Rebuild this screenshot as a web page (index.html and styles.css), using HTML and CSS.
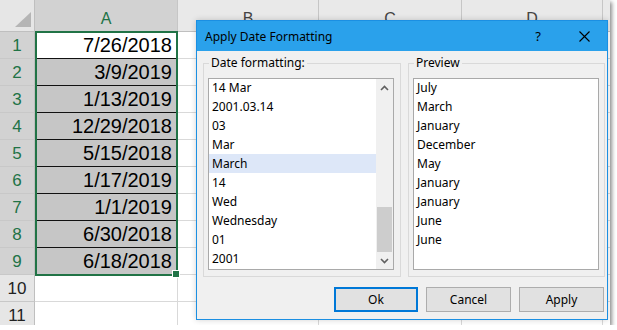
FILE: index.html
```html
<!DOCTYPE html>
<html>
<head>
<meta charset="utf-8">
<link rel="stylesheet" href="styles.css">
</head>
<body>
<div class="frame">
  <div class="sheet">
    <div class="corner"><svg width="18" height="16" viewBox="0 0 18 16"><polygon points="17,0 17,15 1,15" fill="#b5b5b5"/></svg></div>
    <div class="ch sel">A</div><div class="ch">B</div><div class="ch">C</div><div class="ch">D</div><div class="ch edge"></div>

    <div class="rh sel">1</div><div class="c a first">7/26/2018</div><div class="c"></div><div class="c"></div><div class="c"></div><div class="c edge"></div>
    <div class="rh sel">2</div><div class="c a">3/9/2019</div><div class="c"></div><div class="c"></div><div class="c"></div><div class="c edge"></div>
    <div class="rh sel">3</div><div class="c a">1/13/2019</div><div class="c"></div><div class="c"></div><div class="c"></div><div class="c edge"></div>
    <div class="rh sel">4</div><div class="c a">12/29/2018</div><div class="c"></div><div class="c"></div><div class="c"></div><div class="c edge"></div>
    <div class="rh sel">5</div><div class="c a">5/15/2018</div><div class="c"></div><div class="c"></div><div class="c"></div><div class="c edge"></div>
    <div class="rh sel">6</div><div class="c a">1/17/2019</div><div class="c"></div><div class="c"></div><div class="c"></div><div class="c edge"></div>
    <div class="rh sel">7</div><div class="c a">1/1/2019</div><div class="c"></div><div class="c"></div><div class="c"></div><div class="c edge"></div>
    <div class="rh sel">8</div><div class="c a">6/30/2018</div><div class="c"></div><div class="c"></div><div class="c"></div><div class="c edge"></div>
    <div class="rh sel">9</div><div class="c a">6/18/2018</div><div class="c"></div><div class="c"></div><div class="c"></div><div class="c edge"></div>
    <div class="rh">10</div><div class="c"></div><div class="c"></div><div class="c"></div><div class="c"></div><div class="c edge"></div>
    <div class="rh">11</div><div class="c"></div><div class="c"></div><div class="c"></div><div class="c"></div><div class="c edge"></div>
  </div>

  <div class="selection"><span class="handle"></span></div>

  <div class="dialog">
    <div class="titlebar">
      <span class="title">Apply Date Formatting</span>
      <span class="tbtn help">?</span>
      <span class="tbtn close"><svg width="11" height="11" viewBox="0 0 11 11"><path d="M0.5 0.5 L10.5 10.5 M10.5 0.5 L0.5 10.5" stroke="#000" stroke-width="1.1" fill="none"/></svg></span>
    </div>
    <div class="body">
      <div class="groups">
        <fieldset class="group left">
          <legend>Date formatting:</legend>
          <div class="list">
            <div class="items">
              <div class="item">14 Mar</div>
              <div class="item">2001.03.14</div>
              <div class="item">03</div>
              <div class="item">Mar</div>
              <div class="item hl">March</div>
              <div class="item">14</div>
              <div class="item">Wed</div>
              <div class="item">Wednesday</div>
              <div class="item">01</div>
              <div class="item">2001</div>
            </div>
            <div class="scrollbar">
              <div class="sbtn"><svg width="9" height="6" viewBox="0 0 9 6"><path d="M1 5 L4.5 1.5 L8 5" stroke="#606060" stroke-width="1.6" fill="none"/></svg></div>
              <div class="track"><div class="thumb"></div></div>
              <div class="sbtn"><svg width="9" height="6" viewBox="0 0 9 6"><path d="M1 1 L4.5 4.5 L8 1" stroke="#606060" stroke-width="1.6" fill="none"/></svg></div>
            </div>
          </div>
        </fieldset>
        <fieldset class="group right">
          <legend>Preview</legend>
          <div class="list">
            <div class="items">
              <div class="item">July</div>
              <div class="item">March</div>
              <div class="item">January</div>
              <div class="item">December</div>
              <div class="item">May</div>
              <div class="item">January</div>
              <div class="item">January</div>
              <div class="item">June</div>
              <div class="item">June</div>
            </div>
          </div>
        </fieldset>
      </div>
      <div class="buttons">
        <button class="btn default">Ok</button>
        <button class="btn">Cancel</button>
        <button class="btn">Apply</button>
      </div>
    </div>
  </div>
</div>
</body>
</html>
```
FILE: styles.css
```css
html, body {
  margin: 0;
  padding: 0;
  background: #ffffff;
}

.frame {
  position: relative;
  width: 610px;
  height: 325px;
  overflow: hidden;
  box-shadow: 2px 2px 4px rgba(0, 0, 0, 0.45);
  background: #fff;
}

.sheet {
  display: grid;
  grid-template-columns: 35px 143px 141px 143px 141px 7px;
  grid-template-rows: 32px repeat(11, 27px);
  font-family: "Liberation Sans", Arial, sans-serif;
}

.sheet > div {
  box-sizing: border-box;
}

.corner {
  background: #e6e6e6;
  border-right: 1px solid #bfbfbf;
  border-bottom: 1px solid #bfbfbf;
  display: flex;
  align-items: flex-end;
  justify-content: flex-end;
  padding: 0 2px 3px 0;
}

.corner svg {
  display: block;
}

.ch {
  background: #e9e9e9;
  border-right: 1px solid #c6c6c6;
  border-bottom: 1px solid #bfbfbf;
  text-align: center;
  font-size: 16px;
  padding-top: 7px;
  line-height: 24px;
  color: #444;
}

.ch.sel {
  background: #d2d2d2;
  color: #217346;
}

.ch.edge {
  border-right: none;
}

.rh {
  background: #e6e6e6;
  border-right: 1px solid #bfbfbf;
  border-bottom: 1px solid #c8c8c8;
  text-align: center;
  font-size: 17px;
  padding-top: 2px;
  line-height: 24px;
  color: #222;
}

.rh.sel {
  background: #d2d2d2;
  color: #217346;
}

.c {
  border-right: 1px solid #d9d9d9;
  border-bottom: 1px solid #d9d9d9;
  background: #fff;
}

.c.edge {
  border-right: none;
}

.c.a {
  background: #c6c6c6;
  border-bottom: 1px solid #111;
  text-align: right;
  padding-right: 5px;
  font-size: 20px;
  line-height: 26px;
  color: #000;
}

.c.a.first {
  background: #fff;
}

.selection {
  position: absolute;
  left: 35px;
  top: 31px;
  width: 143px;
  height: 245px;
  box-sizing: border-box;
  border: 2px solid #217346;
  pointer-events: none;
}

.handle {
  position: absolute;
  right: -4px;
  bottom: -4px;
  width: 6px;
  height: 6px;
  background: #217346;
  border: 1px solid #fff;
}

.dialog {
  position: absolute;
  left: 196px;
  top: 20px;
  width: 412px;
  height: 300px;
  box-sizing: border-box;
  border: 1px solid #1b8fe2;
  background: #f0f0f0;
  font-family: "Segoe UI", "Noto Sans", "Open Sans", sans-serif;
  font-size: 12px;
  color: #000;
  box-shadow: 0 0 6px rgba(0, 0, 0, 0.18);
}

.titlebar {
  height: 30px;
  background: #2aa1eb;
  display: flex;
  align-items: center;
}

.title {
  flex: 1;
  padding-left: 8px;
  font-size: 12px;
}

.tbtn {
  width: 46px;
  height: 30px;
  display: flex;
  align-items: center;
  justify-content: center;
}

.tbtn.help {
  font-size: 13px;
}

.tbtn svg {
  display: block;
}

.body {
  padding: 5px 0 0 6px;
}

.groups {
  display: flex;
  gap: 7px;
}

.group {
  margin: 0;
  border: 1px solid #d9d9d9;
  padding: 8px 6px 6px 4px;
  box-sizing: border-box;
  width: 198px;
  min-width: 0;
}

.group.right {
  width: 197px;
  padding-right: 5px;
}

.group legend {
  padding: 0 2px;
  margin-left: 1px;
  line-height: 14px;
  font-size: 12px;
}

.list {
  height: 192px;
  width: 186px;
  box-sizing: border-box;
  border: 1px solid #a9a9a9;
  background: #fff;
  display: flex;
  overflow: hidden;
}

.items {
  flex: 1;
  margin-top: -1px;
  min-width: 0;
}

.item {
  height: 19px;
  line-height: 19px;
  padding-left: 3px;
  white-space: nowrap;
}

.item.hl {
  background: #dde7f8;
}

.scrollbar {
  width: 17px;
  background: #f0f0f0;
  display: flex;
  flex-direction: column;
}

.sbtn {
  height: 17px;
  display: flex;
  align-items: center;
  justify-content: center;
}

.sbtn svg {
  display: block;
}

.track {
  flex: 1;
  display: flex;
  flex-direction: column;
  justify-content: flex-end;
  padding: 0 1px;
}

.thumb {
  height: 45px;
  background: #cdcdcd;
}

.buttons {
  width: 401px;
  margin-top: 10px;
  display: flex;
  justify-content: flex-end;
  gap: 8px;
}

.btn {
  height: 25px;
  width: 85px;
  box-sizing: border-box;
  background: #e1e1e1;
  border: 1px solid #adadad;
  font-family: "Segoe UI", "Noto Sans", "Open Sans", sans-serif;
  font-size: 12px;
  color: #000;
  padding: 0;
  margin: 0;
}

.btn.default {
  width: 84px;
  border: 2px solid #0078d7;
}
```
